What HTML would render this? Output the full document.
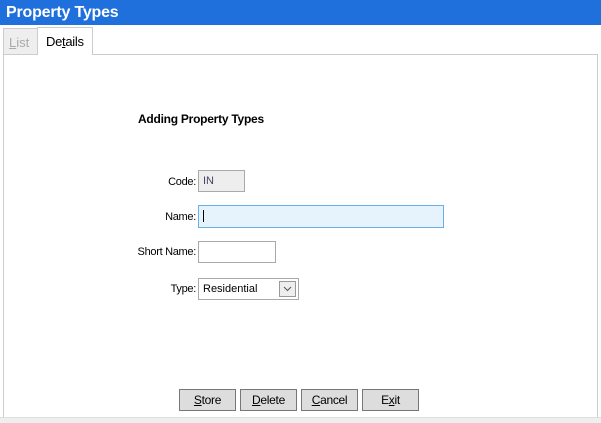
<!DOCTYPE html>
<html><head><style>
*{box-sizing:border-box;margin:0;padding:0}
body{width:601px;height:423px;background:#fff;font-family:"Liberation Sans",Arial,sans-serif;font-size:12px;position:relative;overflow:hidden;color:#000}
.a{position:absolute}
.title{left:0;top:0;width:601px;height:25px;background:#1f6fdc;color:#fff;font-weight:bold;font-size:16px;padding:4px 0 0 6px;letter-spacing:-0.2px}
.panel{left:3px;top:54px;width:595px;height:364px;border:1px solid #ccc}
.lbl{text-align:right;font-size:11px;letter-spacing:-0.3px}
.box{border:1px solid #aaa;background:#fff;font-size:11px;padding:4px 4px}
.btn{top:389px;width:57px;height:22px;border:1px solid #777;background:#ddd;text-align:center;font-size:12px;line-height:20px;letter-spacing:-0.3px}
</style></head><body>
<div class="a title">Property Types</div>
<div class="a" style="left:3px;top:28px;width:35px;height:27px;background:#eee;border:1px solid #ccc;border-bottom:none;color:#aaa;font-size:13px;padding:6px 0 0 5px"><u>L</u>ist</div>
<div class="a panel"></div>
<div class="a" style="left:37px;top:27px;width:56px;height:28px;background:#fff;border:1px solid #ccc;border-bottom:none;font-size:13px;padding:6px 0 0 8px;letter-spacing:-0.3px">De<u>t</u>ails</div>
<div class="a" style="left:0;top:417px;width:601px;height:6px;background:#eee;border-top:1px solid #ddd"></div>
<div class="a" style="left:138px;top:112px;font-weight:bold;font-size:12px;letter-spacing:-0.25px">Adding Property Types</div>
<div class="a lbl" style="left:120px;top:176px;width:76px">Code:</div>
<div class="a box" style="left:198px;top:170px;width:47px;height:22px;background:#eee;color:#446">IN</div>
<div class="a lbl" style="left:120px;top:211px;width:76px">Name:</div>
<div class="a box" style="left:198px;top:205px;width:246px;height:23px;background:#e6f2fc;border-color:#6ab0e8"><span style="display:inline-block;width:1px;height:12px;background:#000"></span></div>
<div class="a lbl" style="left:110px;top:246px;width:86px">Short Name:</div>
<div class="a box" style="left:198px;top:241px;width:78px;height:22px"></div>
<div class="a lbl" style="left:120px;top:283px;width:76px">Type:</div>
<div class="a box" style="left:198px;top:278px;width:101px;height:22px;padding-top:4px">Residential
<div class="a" style="right:2px;top:2px;width:17px;height:16px;border:1px solid #999;background:#eee"><svg width="15" height="14"><path d="M4 5l3.5 3.5L11 5" fill="none" stroke="#555"/></svg></div></div>
<div class="a btn" style="left:179px"><u>S</u>tore</div>
<div class="a btn" style="left:240px"><u>D</u>elete</div>
<div class="a btn" style="left:301px"><u>C</u>ancel</div>
<div class="a btn" style="left:362px">E<u>x</u>it</div>
</body></html>
